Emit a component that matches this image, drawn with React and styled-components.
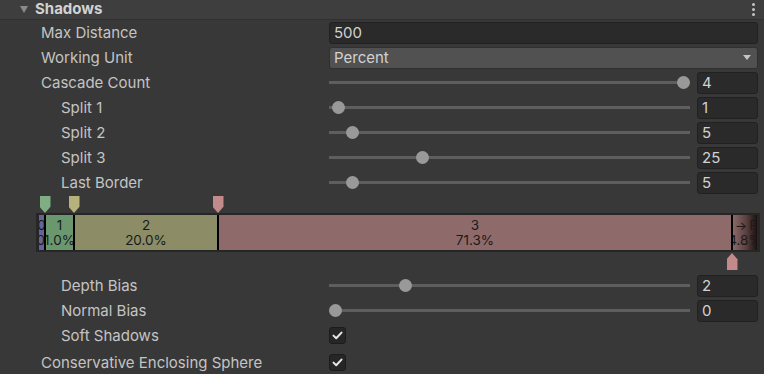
import React from "react";
import styled, { createGlobalStyle } from "styled-components";

const Global = createGlobalStyle`
  html, body { margin: 0; padding: 0; background: #383838; }
  body { font-family: Inter, "Noto Sans", sans-serif; color: #c4c4c4; }
  * { box-sizing: border-box; }
`;

const Panel = styled.div`
  width: 764px;
  height: 374px;
  background: #383838;
  overflow: hidden;
`;

const Header = styled.div`
  height: 20px;
  background: #3e3e3e;
  border-bottom: 1px solid #303030;
  display: flex;
  align-items: center;
  padding-left: 20px;
  padding-right: 9px;
  padding-bottom: 1px;
`;

const Foldout = styled.span`
  width: 0;
  height: 0;
  border-left: 4.5px solid transparent;
  border-right: 4.5px solid transparent;
  border-top: 7px solid #8a8a8a;
  margin-right: 7px;
`;

const Title = styled.span`
  font-size: 15px;
  font-weight: 700;
  color: #d2d2d2;
  flex: 1;
  line-height: 18px;
`;

const Kebab = styled.span`
  display: flex;
  flex-direction: column;
  gap: 2px;
  align-items: center;
  & > i {
    display: block;
    width: 3px;
    height: 3px;
    border-radius: 50%;
    background: #c4c4c4;
  }
`;

const Row = styled.div`
  height: 25px;
  display: flex;
  align-items: center;
  padding-left: ${(p) => (p.$indent ? 61 : 41)}px;
  padding-right: 6px;
  margin-top: ${(p) => p.$gapTop || 0}px;
`;

const Label = styled.span`
  width: ${(p) => (p.$indent ? 268 : 288)}px;
  flex-shrink: 0;
  font-size: 15px;
  color: #c4c4c4;
  white-space: nowrap;
`;

const Control = styled.div`
  flex: 1;
  display: flex;
  align-items: center;
  gap: 7px;
  min-width: 0;
`;

const Field = styled.div`
  height: 22px;
  width: ${(p) => (p.$w ? `${p.$w}px` : "auto")};
  flex: ${(p) => (p.$w ? "0 0 auto" : "1")};
  background: #2a2a2a;
  border: 1px solid #212121;
  border-radius: 3px;
  font-size: 15px;
  color: #d2d2d2;
  padding-left: 4px;
  display: flex;
  align-items: center;
`;

const Dropdown = styled.div`
  flex: 1;
  height: 22px;
  background: #515151;
  border: 1px solid #303030;
  border-radius: 3px;
  font-size: 15px;
  color: #d2d2d2;
  padding: 0 6px 0 4px;
  display: flex;
  align-items: center;
  justify-content: space-between;
`;

const Caret = styled.span`
  width: 0;
  height: 0;
  border-left: 4.5px solid transparent;
  border-right: 4.5px solid transparent;
  border-top: 5px solid #c4c4c4;
`;

const Track = styled.div`
  position: relative;
  flex: 1;
  height: 22px;
  &::before {
    content: "";
    position: absolute;
    left: 0;
    right: 0;
    top: 9px;
    height: 3px;
    background: #5e5e5e;
  }
`;

const Thumb = styled.span`
  position: absolute;
  top: 4px;
  left: calc(${(p) => p.$pct} * (100% - 13px));
  width: 13px;
  height: 13px;
  border-radius: 50%;
  background: #999999;
`;

const Check = styled.div`
  width: 17px;
  height: 17px;
  background: #262626;
  border: 1px solid #1c1c1c;
  border-radius: 3px;
  display: flex;
  align-items: center;
  justify-content: center;
`;

const Cascade = styled.div`
  padding-left: 36px;
  padding-right: 4px;
  margin-top: 1px;
`;

const MarkerStrip = styled.div`
  position: relative;
  height: ${(p) => p.$h}px;
`;

const Marker = styled.span`
  position: absolute;
  top: ${(p) => (p.$up ? 1 : 0)}px;
  width: 11px;
  height: 17px;
  background: ${(p) => p.$color};
  clip-path: ${(p) =>
    p.$up
      ? "polygon(50% 0, 100% 37%, 100% 100%, 0 100%, 0 37%)"
      : "polygon(0 0, 100% 0, 100% 63%, 50% 100%, 0 63%)"};
`;

const Bar = styled.div`
  display: flex;
  height: 39px;
  background: #262626;
  padding: 2px 3px 2px 3px;
`;

const Segment = styled.div`
  flex: 0 0 ${(p) => p.$w}px;
  background: ${(p) => p.$bg};
  border-left: ${(p) => (p.$first ? "none" : "2px solid #000")};
  overflow: hidden;
  display: flex;
  flex-direction: column;
  align-items: center;
  justify-content: center;
  font-size: 13.5px;
  line-height: 15px;
  color: #1a1a1a;
  white-space: nowrap;
`;

const Dim = styled.span`
  display: block;
  text-align: center;
  align-self: ${(p) => (p.$left ? "flex-start" : "center")};
  padding-left: ${(p) => (p.$left ? 2 : 0)}px;
  font-size: ${(p) => (p.$left ? "12.5px" : "inherit")};
  letter-spacing: ${(p) => (p.$left ? "-0.5px" : "normal")};
`;

const Spacer = styled.div`
  height: ${(p) => p.$h}px;
`;

function Slider({ label, value, pct, indent }) {
  return (
    <Row $indent={indent}>
      <Label $indent={indent}>{label}</Label>
      <Control>
        <Track>
          <Thumb $pct={pct} />
        </Track>
        <Field $w={61}>{value}</Field>
      </Control>
    </Row>
  );
}

const CheckMark = () => (
  <svg width="11" height="9" viewBox="0 0 11 9">
    <path d="M1.5 4.6 L4.2 7.2 L9.5 1.6" fill="none" stroke="#e8e8e8" strokeWidth="2" strokeLinecap="round" strokeLinejoin="round" />
  </svg>
);

const segments = [
  { w: 5, bg: "#64649a", a: "0", b: "0.0%", first: true },
  { w: 29, bg: "#6b976f", a: "1", b: "1.0%" },
  { w: 144, bg: "#8c8c66", a: "2", b: "20.0%" },
  { w: 514, bg: "#8f6a6a", a: "3", b: "71.3%" },
  { w: 26, bg: "linear-gradient(to right, #8c6868, #5a4040 55%, #1a1010)", a: "→ F", b: "4.8%", left: true },
];

export default function App() {
  return (
    <Panel>
      <Global />
      <Header>
        <Foldout />
        <Title>Shadows</Title>
        <Kebab>
          <i />
          <i />
          <i />
        </Kebab>
      </Header>
      <Row>
        <Label>Max Distance</Label>
        <Control>
          <Field>500</Field>
        </Control>
      </Row>
      <Row>
        <Label>Working Unit</Label>
        <Control>
          <Dropdown>
            Percent
            <Caret />
          </Dropdown>
        </Control>
      </Row>
      <Slider label="Cascade Count" value="4" pct={1} />
      <Slider label="Split 1" value="1" pct={0.01} indent />
      <Slider label="Split 2" value="5" pct={0.05} indent />
      <Slider label="Split 3" value="25" pct={0.25} indent />
      <Slider label="Last Border" value="5" pct={0.05} indent />
      <Cascade>
        <MarkerStrip $h={17}>
          <Marker $color="#7fae82" style={{ left: 3.5 }} />
          <Marker $color="#b6b27c" style={{ left: 32.5 }} />
          <Marker $color="#c28a8a" style={{ left: 176.5 }} />
        </MarkerStrip>
        <Bar>
          {segments.map((s, i) => (
            <Segment key={i} $w={s.w} $bg={s.bg} $first={s.first}>
              <Dim $left={s.left}>{s.a}</Dim>
              <Dim>{s.b}</Dim>
            </Segment>
          ))}
        </Bar>
        <MarkerStrip $h={17}>
          <Marker $up $color="#c28a8a" style={{ left: 690.5 }} />
        </MarkerStrip>
      </Cascade>
      <Spacer $h={4} />
      <Slider label="Depth Bias" value="2" pct={0.2} indent />
      <Slider label="Normal Bias" value="0" pct={0} indent />
      <Row $indent>
        <Label $indent>Soft Shadows</Label>
        <Control>
          <Check>
            <CheckMark />
          </Check>
        </Control>
      </Row>
      <Row $gapTop={2}>
        <Label>Conservative Enclosing Sphere</Label>
        <Control>
          <Check>
            <CheckMark />
          </Check>
        </Control>
      </Row>
    </Panel>
  );
}
